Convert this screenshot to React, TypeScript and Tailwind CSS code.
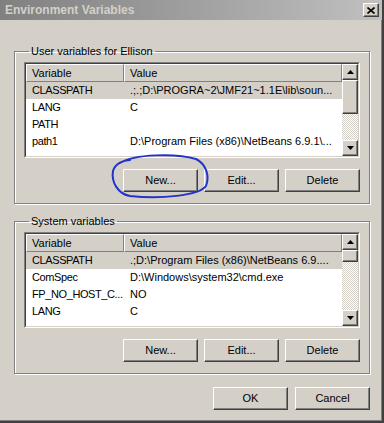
import React from "react";

type Row = { name: string; value: string; selected?: boolean };

const USER_VARS: Row[] = [
  { name: "CLASSPATH", value: ".;.;D:\\PROGRA~2\\JMF21~1.1E\\lib\\soun...", selected: true },
  { name: "LANG", value: "C" },
  { name: "PATH", value: "" },
  { name: "path1", value: "D:\\Program Files (x86)\\NetBeans 6.9.1\\..." },
];

const SYSTEM_VARS: Row[] = [
  { name: "CLASSPATH", value: ".;D:\\Program Files (x86)\\NetBeans 6.9....", selected: true },
  { name: "ComSpec", value: "D:\\Windows\\system32\\cmd.exe" },
  { name: "FP_NO_HOST_C...", value: "NO" },
  { name: "LANG", value: "C" },
];

const RAISED =
  "border border-t-white border-l-white border-r-[#404040] border-b-[#404040] shadow-[inset_-1px_-1px_0_#808080] bg-[#d4d0c8]";

function Arrow({ up }: { up?: boolean }) {
  return (
    <div className={`w-4 h-4 shrink-0 flex items-center justify-center ${RAISED}`}>
      <svg width="7" height="4" viewBox="0 0 7 4">
        {up ? <path d="M3.5 0L7 4H0z" fill="#000" /> : <path d="M0 0H7L3.5 4z" fill="#000" />}
      </svg>
    </div>
  );
}

function ScrollBar({ thumb }: { thumb: number }) {
  return (
    <div className="w-4 flex flex-col shrink-0">
      <Arrow up />
      <div className={`w-4 shrink-0 ${RAISED}`} style={{ height: thumb }} />
      <div className="flex-1 bg-[repeating-conic-gradient(#ffffff_0_25%,#d4d0c8_0_50%)] bg-[length:2px_2px]" />
      <Arrow />
    </div>
  );
}

function ListView({ rows, thumb }: { rows: Row[]; thumb: number }) {
  return (
    <div className="flex h-[96px] border border-t-[#808080] border-l-[#808080] border-r-white border-b-white">
      <div className="flex flex-1 border border-t-[#404040] border-l-[#404040] border-r-[#d4d0c8] border-b-[#d4d0c8] bg-white">
        <div className="flex-1 flex flex-col overflow-hidden">
          <div className="flex h-[18px] shrink-0 bg-[#d4d0c8]">
            <div className="w-[98px] pl-[5px] leading-[16px] border border-t-white border-l-white border-r-[#808080] border-b-[#808080]">Variable</div>
            <div className="flex-1 pl-[5px] leading-[16px] border border-t-white border-l-white border-r-[#808080] border-b-[#808080]">Value</div>
          </div>
          {rows.map((r) => (
            <div key={r.name} className={`flex h-[17px] shrink-0 leading-[17px] ${r.selected ? "bg-[#d4d0c8]" : ""}`}>
              <div className="w-[98px] pl-[6px] whitespace-nowrap overflow-hidden tracking-[-0.4px]">{r.name}</div>
              <div className="flex-1 pl-[6px] whitespace-nowrap overflow-hidden">{r.value}</div>
            </div>
          ))}
        </div>
        <ScrollBar thumb={thumb} />
      </div>
    </div>
  );
}

function Btn({ label }: { label: string }) {
  return (
    <button className={`w-[75px] h-[23px] text-center text-black ${RAISED}`}>{label}</button>
  );
}

function Group({ title, rows, thumb }: { title: string; rows: Row[]; thumb: number }) {
  return (
    <fieldset className="border border-[#808080] shadow-[inset_1px_1px_0_#fff,1px_1px_0_#fff] px-[9px] pt-[4px] pb-[11px]">
      <legend className="ml-[5px] px-[2px] leading-[13px]">{title}</legend>
      <ListView rows={rows} thumb={thumb} />
      <div className="flex justify-end gap-[6px] mt-[11px]">
        <Btn label="New..." />
        <Btn label="Edit..." />
        <Btn label="Delete" />
      </div>
    </fieldset>
  );
}

export default function App() {
  return (
    <div className="relative w-[384px] h-[423px] overflow-hidden bg-[#d4d0c8] text-[11px] text-black font-['Liberation_Sans',Arial,sans-serif] border-r-2 border-b-2 border-r-[#404040] border-b-[#404040] shadow-[inset_-1px_-1px_0_#808080]">
      <div className="h-[20px] flex items-center justify-between bg-gradient-to-r from-[#808080] to-[#c0c0c0] pl-[5px] pr-[3px]">
        <span className="font-bold text-[12px] text-[#d4d0c8]">Environment Variables</span>
        <div className={`w-[16px] h-[14px] flex items-center justify-center ${RAISED}`}>
          <svg width="8" height="7" viewBox="0 0 8 7">
            <path d="M0.5 0.5L7.5 6.5M7.5 0.5L0.5 6.5" stroke="#000" strokeWidth="1.6" />
          </svg>
        </div>
      </div>

      <div className="flex flex-col pl-[14px] pr-[12px] pt-[25px] gap-[11px]">
        <Group title="User variables for Ellison" rows={USER_VARS} thumb={34} />
        <Group title="System variables" rows={SYSTEM_VARS} thumb={12} />
        <div className="flex justify-end gap-[7px] mt-[2px]">
          <Btn label="OK" />
          <Btn label="Cancel" />
        </div>
      </div>

      <svg className="absolute left-0 top-0 pointer-events-none" width="384" height="423">
        <path
          d="M120 163 C134 154 176 153 196 159 C206 164 210 176 206 186 C199 196 160 199 130 196 C118 194 111 182 113 171 C115 164 123 160 130 160"
          fill="none"
          stroke="#2233cc"
          strokeWidth="2"
          strokeLinecap="round"
        />
      </svg>
    </div>
  );
}
